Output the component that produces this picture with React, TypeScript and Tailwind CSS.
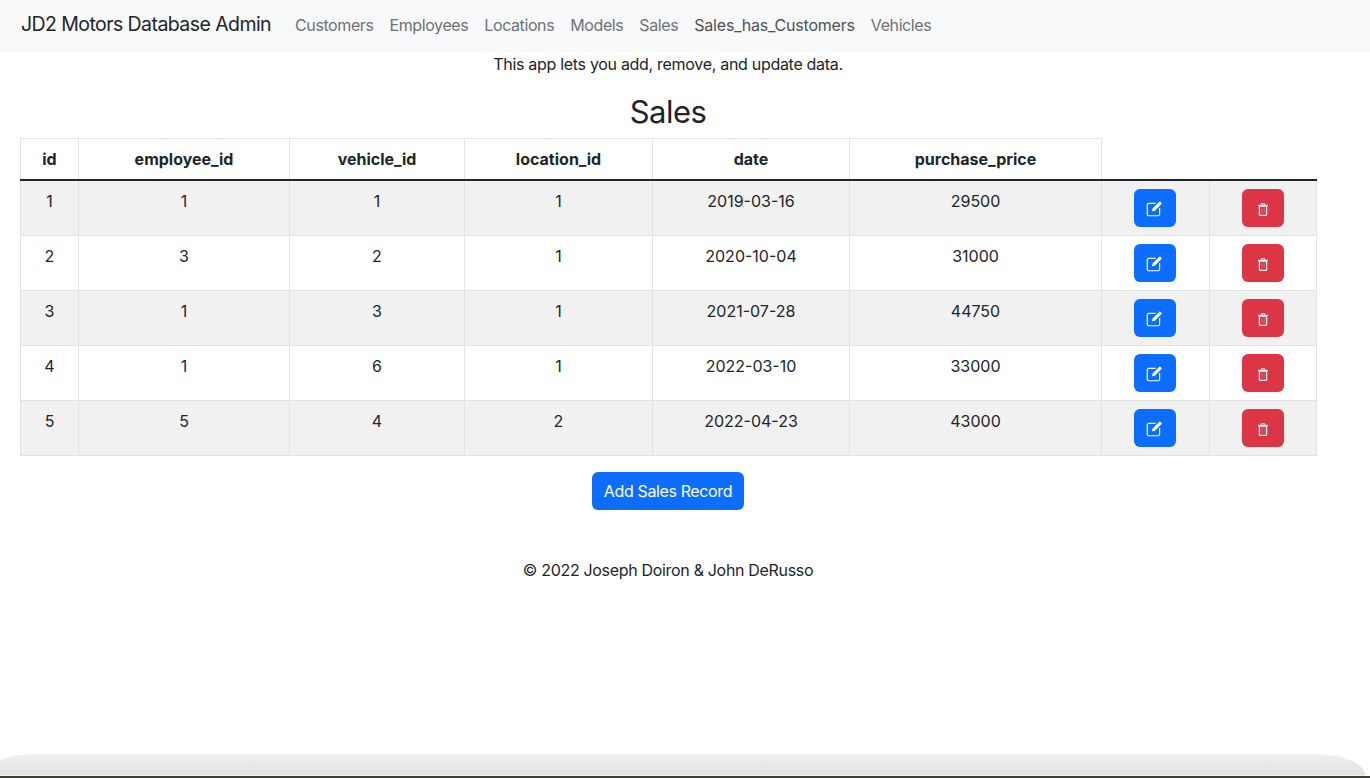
import React from "react";

const links = ["Customers", "Employees", "Locations", "Models", "Sales", "Sales_has_Customers", "Vehicles"];
const headers: [string, string][] = [
  ["id", "w-[58px]"],
  ["employee_id", "w-[211px]"],
  ["vehicle_id", "w-[175px]"],
  ["location_id", "w-[188px]"],
  ["date", "w-[197px]"],
  ["purchase_price", "w-[252px]"],
];
const rows = [
  ["1", "1", "1", "1", "2019-03-16", "29500"],
  ["2", "3", "2", "1", "2020-10-04", "31000"],
  ["3", "1", "3", "1", "2021-07-28", "44750"],
  ["4", "1", "6", "1", "2022-03-10", "33000"],
  ["5", "5", "4", "2", "2022-04-23", "43000"],
];

function EditIcon() {
  return (
    <svg viewBox="0 0 16 16" className="mt-[1px] h-[17px] w-[17px]" fill="none" stroke="currentColor">
      <path d="M9 3.2H2.6A1.4 1.4 0 0 0 1.2 4.6v8.8a1.4 1.4 0 0 0 1.4 1.4h8.8a1.4 1.4 0 0 0 1.4-1.4V7.6" strokeWidth="1.1" />
      <path d="M5.6 10.7l.6-2.7 6.3-6.3a.7.7 0 0 1 1 0l1.1 1.1a.7.7 0 0 1 0 1L8.3 10.1z" fill="currentColor" stroke="none" />
    </svg>
  );
}

function TrashIcon() {
  return (
    <svg viewBox="0 0 10 13" className="mt-[3px] h-[13px] w-[10px]" fill="none" stroke="currentColor" strokeWidth="1.25">
      <path d="M0 2.5h10" />
      <path d="M3.2 2.2V.8h3.6v1.4" strokeWidth="1" />
      <rect x="1.4" y="3" width="7.2" height="9.3" rx="0.8" />
      <path d="M3.8 4.8v5.6M6.2 4.8v5.6" strokeWidth="0.8" opacity="0.3" />
    </svg>
  );
}

export default function App() {
  return (
    <div className="relative h-[778px] w-[1370px] overflow-hidden bg-white text-[#212529] font-['Inter','Liberation_Sans',sans-serif] text-base">
      <nav className="flex h-[52px] items-center bg-[#f8f9fa] pb-[2px] pl-[21px]">
        <a className="mr-4 text-[19.5px] tracking-[-0.57px] text-[#212529]">JD2 Motors Database Admin</a>
        <div className="ml-2 flex gap-4 tracking-[-0.4px]">
          {links.map((l) => (
            <a key={l} className={l === "Sales_has_Customers" ? "tracking-[-0.2px] text-[#4d5154]" : "text-[#6f7174]"}>
              {l}
            </a>
          ))}
        </div>
      </nav>
      <div className="w-[1336px]">
        <p className="text-center leading-6 tracking-[-0.3px]">This app lets you add, remove, and update data.</p>
        <h1 className="mt-[17px] mb-[7px] text-center text-[31px] leading-[38px] tracking-[-0.5px]">Sales</h1>
        <div className="px-5">
          <table className="w-[1296px] table-fixed border-collapse">
            <thead>
              <tr className="h-[41px]">
                {headers.map(([h, w]) => (
                  <th key={h} className={`${w} border border-[#e3e3e3] border-b-2 border-b-[#212529] text-center font-bold`}>
                    {h}
                  </th>
                ))}
                <th className="w-[108px] border-b-2 border-b-[#212529]"></th>
                <th className="w-[107px] border-b-2 border-b-[#212529]"></th>
              </tr>
            </thead>
            <tbody>
              {rows.map((r, i) => (
                <tr
                  key={r[0]}
                  className={i === 0 ? "h-[56px] bg-[#f1f1f1]" : i % 2 === 0 ? "h-[55px] bg-[#f1f1f1]" : "h-[55px] bg-white"}
                >
                  {r.map((c, j) => (
                    <td key={j} className="border border-[#e3e3e3] px-2 pb-[20px] pt-[8px] text-center align-top leading-6">
                      {c}
                    </td>
                  ))}
                  <td className={`border border-[#e3e3e3] pr-[2px] text-center align-middle ${i === 0 ? "pt-[1px]" : ""}`}>
                    <button className="inline-flex h-[38px] w-[42px] items-center justify-center rounded-md bg-[#0d6efd] text-white">
                      <EditIcon />
                    </button>
                  </td>
                  <td className={`border border-[#e3e3e3] text-center align-middle ${i === 0 ? "pt-[1px]" : ""}`}>
                    <button className="inline-flex h-[38px] w-[42px] items-center justify-center rounded-md bg-[#dc3545] text-white">
                      <TrashIcon />
                    </button>
                  </td>
                </tr>
              ))}
            </tbody>
          </table>
        </div>
        <div className="mt-4 flex justify-center">
          <button className="h-[38px] rounded-md bg-[#0d6efd] px-3 tracking-[-0.37px] text-white">Add Sales Record</button>
        </div>
        <p className="mt-[48px] text-center leading-6 tracking-[-0.32px]">© 2022 Joseph Doiron &amp; John DeRusso</p>
      </div>
      <div className="absolute bottom-0 left-0 right-0 h-[2px] bg-[#3f3f35]"></div>
      <div className="absolute bottom-[2px] left-[-15px] right-[5px] h-[22px] rounded-tl-[50px_21px] rounded-tr-[50px_21px] border-b border-b-[#f4f4f4] bg-gradient-to-b from-[#f1f1f1] to-[#e1e1e1]"></div>
    </div>
  );
}
